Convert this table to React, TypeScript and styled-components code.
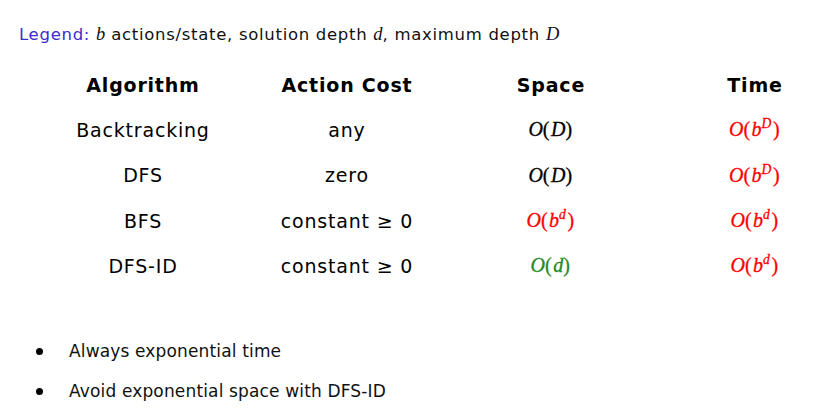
import React, { FC } from 'react'
import styled, { createGlobalStyle } from 'styled-components'

type Tone = 'plain' | 'bad' | 'good'

interface Row {
    algorithm: string
    cost: string
    space: [string, string?, Tone?]
    time: [string, string?, Tone?]
}

const rows: Row[] = [
    { algorithm: 'Backtracking', cost: 'any', space: ['D'], time: ['b', 'D', 'bad'] },
    { algorithm: 'DFS', cost: 'zero', space: ['D'], time: ['b', 'D', 'bad'] },
    { algorithm: 'BFS', cost: 'constant ≥ 0', space: ['b', 'd', 'bad'], time: ['b', 'd', 'bad'] },
    { algorithm: 'DFS-ID', cost: 'constant ≥ 0', space: ['d', undefined, 'good'], time: ['b', 'd', 'bad'] },
]

const Global = createGlobalStyle`
    html, body {
        margin: 0;
        padding: 0;
        background: #ffffff;
        overflow: hidden;
    }
    body {
        font-family: "DejaVu Sans", "Open Sans", sans-serif;
        color: #000000;
    }
`

const BigO: FC<{ value: [string, string?, Tone?] }> = ({ value }) => {
    const [base, exp, tone] = value
    return (
        <Math $tone={tone ?? 'plain'}>
            <Var>O</Var>(<Var>{base}</Var>
            {exp && <Sup>{exp}</Sup>})
        </Math>
    )
}

const App: FC = () => {
  return (
    <>
    <Global />
    <Page>
        <Legend>
            <LegendLabel>Legend:</LegendLabel> <Var>b</Var> actions/state, solution depth <Var>d</Var>, maximum depth <Var>D</Var>
        </Legend>
        <Table>
            <Head>Algorithm</Head>
            <Head>Action Cost</Head>
            <Head>Space</Head>
            <Head>Time</Head>
            {rows.map((r) => (
                <React.Fragment key={r.algorithm}>
                    <Cell>{r.algorithm}</Cell>
                    <Cell>{r.cost}</Cell>
                    <Cell><BigO value={r.space} /></Cell>
                    <Cell><BigO value={r.time} /></Cell>
                </React.Fragment>
            ))}
        </Table>
        <Bullets>
            <Bullet>Always exponential time</Bullet>
            <Bullet>Avoid exponential space with DFS-ID</Bullet>
        </Bullets>
    </Page>
    </>
  )
}

export default App

const Page = styled.div`
    width: 820px;
    height: 409px;
    padding: 22px 0 0 19px;
    box-sizing: border-box;
`

const Legend = styled.div`
    font-size: 16.5px;
    line-height: 24px;
    letter-spacing: 0.7px;
    color: #111111;
`

const LegendLabel = styled.span`
    color: #3d2ccc;
`

const Var = styled.i`
    font-family: "Liberation Serif", "DejaVu Serif", serif;
    font-style: italic;
    font-size: 1.12em;
    letter-spacing: 0;
`

const Table = styled.div`
    display: grid;
    grid-template-columns: repeat(4, 204px);
    grid-auto-rows: 45.3px;
    margin: 15px 0 0 22px;
    align-items: center;
    justify-items: center;
`

const Head = styled.div`
    font-size: 19px;
    font-weight: 700;
    letter-spacing: 0.8px;
`

const Cell = styled.div`
    font-size: 19px;
    letter-spacing: 0.8px;
`

const Math = styled.span<{ $tone: Tone }>`
    font-family: "Liberation Serif", "DejaVu Serif", serif;
    font-size: 20px;
    color: ${(p) => (p.$tone === 'bad' ? '#ff0000' : p.$tone === 'good' ? '#1f8a1f' : '#000000')};
    letter-spacing: 1.5px;
    -webkit-text-stroke: 0.3px currentColor;

    ${Var} {
        font-size: 1em;
    }
`

const Sup = styled.sup`
    font-style: italic;
    font-size: 0.68em;
    vertical-align: 0.6em;
    line-height: 0;
`

const Bullets = styled.ul`
    list-style: none;
    margin: 52px 0 0 0;
    padding: 0;
    display: flex;
    flex-direction: column;
    gap: 17px;
`

const Bullet = styled.li`
    display: flex;
    align-items: center;
    font-size: 17px;
    line-height: 23px;
    letter-spacing: 0.15px;
    color: #111111;

    &::before {
        content: '';
        width: 7px;
        height: 7px;
        border-radius: 50%;
        background: #000000;
        margin: 0 26px 0 17px;
    }
`
